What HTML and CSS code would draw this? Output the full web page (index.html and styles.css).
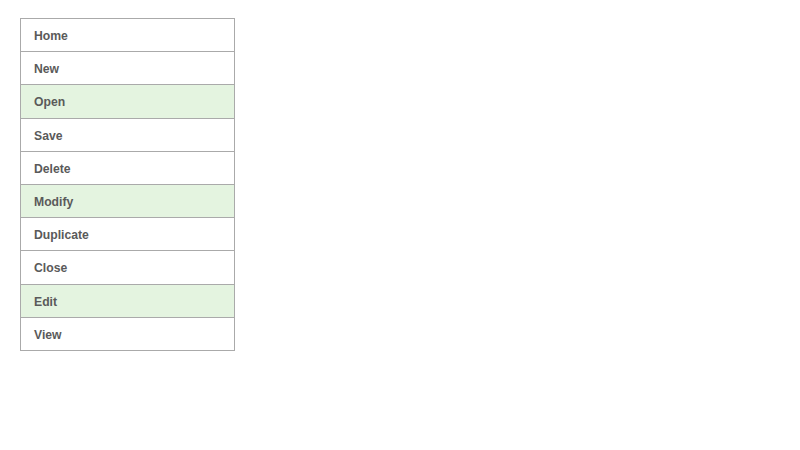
FILE: index.html
```html
<!DOCTYPE html>
<html>
<head>
<meta charset="utf-8">
<link rel="stylesheet" href="styles.css">
</head>
<body>
<ul class="menu">
  <li class="item">Home</li>
  <li class="item">New</li>
  <li class="item alt">Open</li>
  <li class="item">Save</li>
  <li class="item">Delete</li>
  <li class="item alt">Modify</li>
  <li class="item">Duplicate</li>
  <li class="item">Close</li>
  <li class="item alt">Edit</li>
  <li class="item">View</li>
</ul>
</body>
</html>
```
FILE: styles.css
```css
html, body {
  margin: 0;
  padding: 0;
  background: #fff;
}
body {
  padding: 18px 20px;
  font-family: "Liberation Sans", Arial, sans-serif;
}
.menu {
  list-style: none;
  margin: 0;
  padding: 0;
  width: 213px;
  border: 1px solid #aaaaaa;
}
.item {
  height: 30.2px;
  line-height: 30.2px;
  padding: 2px 13px 0;
  font-size: 12.2px;
  font-weight: bold;
  color: #5a5a5a;
  border-bottom: 1px solid #aaaaaa;
  background: #ffffff;
}
.item:last-child {
  border-bottom: none;
}
.item.alt {
  background: #e4f4e0;
}
```
